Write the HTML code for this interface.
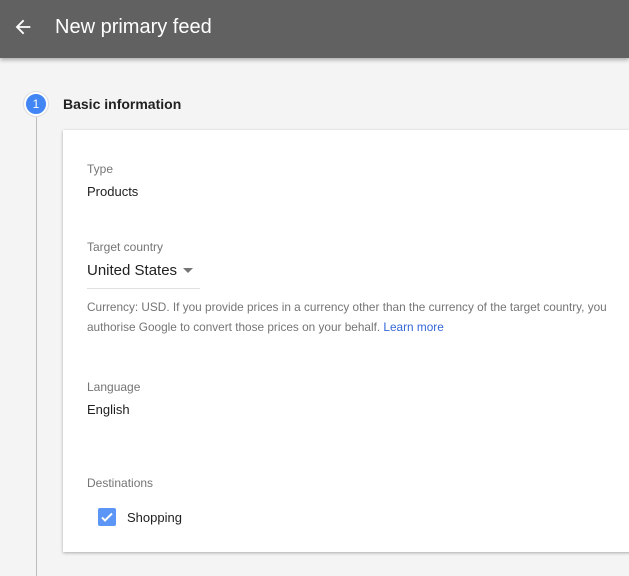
<!DOCTYPE html>
<html><head><style>
*{margin:0;padding:0;box-sizing:border-box}
body{width:629px;height:575px;overflow:hidden;background:#f4f4f4;font-family:"Liberation Sans",Arial,sans-serif;position:relative}
.hdr{position:absolute;left:0;top:0;width:629px;height:58px;background:#616161;box-shadow:0 2px 4px rgba(0,0,0,.3)}
.hdr .t{position:absolute;left:55px;top:16px;color:#fff;font-size:20px;}
.t2{position:absolute;white-space:nowrap}
.line{position:absolute;left:36px;top:116px;width:1px;height:460px;background:#bdbdbd}
.circ{position:absolute;left:24px;top:92px;width:24px;height:24px;border-radius:50%;background:#4285f4;border:2px solid #fff;box-shadow:0 0 0 1px #ddd;color:#fff;font-size:12px;text-align:center;line-height:20px}
.card{position:absolute;left:63px;top:130px;width:580px;height:422px;background:#fff;box-shadow:0 1px 3px rgba(0,0,0,.3)}
.lbl{font-size:12px;color:#757575}
.val{font-size:13px;color:#212121}
</style></head><body>
<div class="hdr">
<svg style="position:absolute;left:12px;top:16px" width="22" height="22" viewBox="0 0 24 24"><path d="M20 11H7.830l5.59-5.59L12 4l-8 8 8 8 1.41-1.41L7.83 13H20v-2z" fill="#fff"/></svg>
<div class="t">New primary feed</div></div>
<div class="line"></div>
<div class="circ">1</div>
<div class="t2" style="left:63px;top:96px;font-size:14px;font-weight:bold;color:#212121">Basic information</div>
<div class="card"></div>
<div class="t2 lbl" style="left:87px;top:162px">Type</div>
<div class="t2 val" style="left:87px;top:184px">Products</div>
<div class="t2 lbl" style="left:87px;top:240px">Target country</div>
<div class="t2" style="left:87px;top:262px;font-size:15px;color:#212121">United States</div>
<div style="position:absolute;left:183px;top:268px;width:0;height:0;border-left:5px solid transparent;border-right:5px solid transparent;border-top:5px solid #757575"></div>
<div style="position:absolute;left:87px;top:288px;width:113px;height:1px;background:#e0e0e0"></div>
<div class="t2 lbl" style="left:87px;top:297px;font-size:11.8px;line-height:20px">Currency: USD. If you provide prices in a currency other than the currency of the target country, you<br>authorise Google to convert those prices on your behalf. <span style="color:#3367d6">Learn more</span></div>
<div class="t2 lbl" style="left:87px;top:380px">Language</div>
<div class="t2 val" style="left:87px;top:402px">English</div>
<div class="t2 lbl" style="left:87px;top:476px">Destinations</div>
<div style="position:absolute;left:98px;top:508px;width:18px;height:18px;background:#5b95f5;border-radius:2px"><svg width="18" height="18" viewBox="0 0 18 18"><path d="M4 9.5l3 3 7-7" stroke="#fff" stroke-width="2" fill="none"/></svg></div>
<div class="t2 val" style="left:127px;top:510px">Shopping</div>
</body></html>
